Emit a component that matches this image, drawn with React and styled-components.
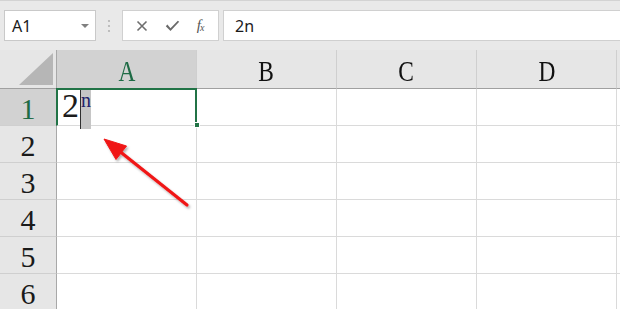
import React from "react";
import styled, { createGlobalStyle } from "styled-components";

const Global = createGlobalStyle`
  html, body { margin: 0; padding: 0; background: #ffffff; overflow: hidden; }
  * { box-sizing: border-box; }
`;

const Page = styled.div`
  position: relative;
  width: 620px;
  height: 309px;
  overflow: hidden;
  background: #ffffff;
  font-family: "Liberation Serif", "Times New Roman", serif;
`;

const Toolbar = styled.div`
  height: 50px;
  background: #e9e9e9;
  border-top: 1px solid #d3d3d3;
  display: flex;
  align-items: flex-start;
  padding-top: 9px;
  padding-left: 4px;
`;

const NameBox = styled.div`
  width: 92px;
  height: 31px;
  background: #fff;
  border: 1px solid #c9c9c9;
  display: flex;
  align-items: center;
  justify-content: space-between;
  padding: 0 6px 0 7px;
  font-family: "Noto Sans", "Liberation Sans", sans-serif;
  font-size: 16px;
  color: #1a1a1a;
`;

const Caret = styled.span`
  width: 0;
  height: 0;
  border-left: 4px solid transparent;
  border-right: 4px solid transparent;
  border-top: 4px solid #808080;
  margin-top: 1px;
`;

const Dots = styled.div`
  width: 26px;
  height: 31px;
  display: flex;
  align-items: center;
  justify-content: center;
`;

const IconBox = styled.div`
  width: 97px;
  height: 31px;
  background: #fff;
  border: 1px solid #d0d0d0;
  display: flex;
  align-items: center;
  justify-content: space-around;
  padding: 0 6px 0 4px;
  color: #707070;
`;

const Fx = styled.span`
  font-family: "Liberation Serif", serif;
  font-style: italic;
  font-size: 15px;
  color: #555;
  letter-spacing: -1px;
  sub { font-size: 10px; vertical-align: -1px; }
`;

const FormulaInput = styled.div`
  flex: 1;
  margin-left: 4px;
  height: 31px;
  background: #fff;
  border: 1px solid #d0d0d0;
  border-right: none;
  display: flex;
  align-items: center;
  padding-left: 11px;
  font-family: "Noto Sans", "Liberation Sans", sans-serif;
  font-size: 16px;
  color: #1a1a1a;
`;

const Grid = styled.div`
  display: grid;
  grid-template-columns: 57px 140px 140px 140px 140px 10px;
  grid-template-rows: 39px repeat(6, 37px);
`;

const Corner = styled.div`
  background: #e6e6e6;
  border-right: 1px solid #a8a8a8;
  border-bottom: 1px solid #a0a0a0;
  display: flex;
  align-items: flex-end;
  justify-content: flex-end;
  padding: 0 3px 3px 0;
`;

const ColHead = styled.div`
  background: ${(p) => (p.$active ? "#d2d2d2" : "#e6e6e6")};
  color: ${(p) => (p.$active ? "#1e6b45" : "#111")};
  border-right: 1px solid #cfcfcf;
  border-bottom: 1px solid #a0a0a0;
  display: flex;
  align-items: center;
  justify-content: center;
  padding-top: 4px;
  font-size: 30px;
  line-height: 1;
`;

const Narrow = styled.span`
  display: inline-block;
  transform: scaleX(0.78);
`;

const RowHead = styled.div`
  background: ${(p) => (p.$active ? "#d2d2d2" : "#e6e6e6")};
  color: ${(p) => (p.$active ? "#1e6b45" : "#1a1a1a")};
  border-right: 1px solid #a8a8a8;
  border-bottom: 1px solid #cfcfcf;
  display: flex;
  align-items: center;
  justify-content: center;
  padding-top: 3px;
  font-size: 30px;
  line-height: 1;
`;

const Cell = styled.div`
  position: relative;
  background: #fff;
  border-right: 1px solid #dadada;
  border-bottom: 1px solid #dadada;
`;

const ActiveCell = styled.div`
  position: relative;
  background: #fff;
  border-top: 2px solid #217346;
  border-left: 2px solid #217346;
  border-right: 2px solid #217346;
  border-bottom: 1px solid #dadada;
  margin-top: -1px;
  margin-left: -1px;
  display: flex;
  align-items: stretch;
  padding-left: 4px;
  z-index: 1;
`;

const Digit = styled.span`
  font-size: 34px;
  line-height: 1;
  color: #1c1c1c;
  align-self: flex-end;
  margin-bottom: 2px;
`;

const Selection = styled.span`
  display: block;
  width: 11px;
  height: 39px;
  margin-left: 1px;
  background: #c6c6c6;
  border-left: 1px solid #303030;
  font-family: "Liberation Serif", serif;
  font-size: 20px;
  line-height: 16px;
  color: #22236a;
  padding-left: 0;
  padding-top: 2px;
  overflow: visible;
  white-space: nowrap;
`;

const Handle = styled.span`
  position: absolute;
  right: -5px;
  bottom: -3px;
  width: 6px;
  height: 6px;
  background: #217346;
  border: 1px solid #fff;
`;

const Overlay = styled.svg`
  position: absolute;
  left: 0;
  top: 0;
  pointer-events: none;
`;

const cols = ["A", "B", "C", "D"];
const rows = [1, 2, 3, 4, 5, 6];

export default function App() {
  return (
    <Page>
      <Global />
      <Toolbar>
        <NameBox>
          A1
          <Caret />
        </NameBox>
        <Dots>
          <svg width="4" height="14" viewBox="0 0 4 14">
            <circle cx="2" cy="2" r="1.1" fill="#b3b3b3" />
            <circle cx="2" cy="7" r="1.1" fill="#b3b3b3" />
            <circle cx="2" cy="12" r="1.1" fill="#b3b3b3" />
          </svg>
        </Dots>
        <IconBox>
          <svg width="12" height="12" viewBox="0 0 12 12">
            <path d="M1.5 1.5 L10.5 10.5 M10.5 1.5 L1.5 10.5" stroke="#6e6e6e" strokeWidth="1.6" fill="none" />
          </svg>
          <svg width="15" height="12" viewBox="0 0 15 12">
            <path d="M0.8 6.2 L5.5 11 L14.2 1.8 L12.8 0.8 L5.5 8.2 L2.4 4.6 Z" fill="#6a6a6a" />
          </svg>
          <Fx>
            f<sub>x</sub>
          </Fx>
        </IconBox>
        <FormulaInput>2n</FormulaInput>
      </Toolbar>
      <Grid>
        <Corner>
          <svg width="34" height="32" viewBox="0 0 34 32">
            <polygon points="34,0 34,32 0,32" fill="#b6b6b6" />
          </svg>
        </Corner>
        {cols.map((c, i) => (
          <ColHead key={c} $active={i === 0}>
            <Narrow>{c}</Narrow>
          </ColHead>
        ))}
        <ColHead />
        {rows.map((r) => (
          <React.Fragment key={r}>
            <RowHead $active={r === 1}>{r}</RowHead>
            {cols.map((c, i) =>
              r === 1 && i === 0 ? (
                <ActiveCell key={c}>
                  <Digit>2</Digit>
                  <Selection>n</Selection>
                  <Handle />
                </ActiveCell>
              ) : (
                <Cell key={c} />
              )
            )}
            <Cell />
          </React.Fragment>
        ))}
      </Grid>
      <Overlay width="620" height="309" viewBox="0 0 620 309">
        <defs>
          <filter id="sh" x="-20%" y="-20%" width="140%" height="140%">
            <feDropShadow dx="1.5" dy="2" stdDeviation="1.2" floodColor="#000" floodOpacity="0.3" />
          </filter>
        </defs>
        <g filter="url(#sh)" fill="#f01616" stroke="#f01616">
          <line x1="187" y1="205" x2="118" y2="150" strokeWidth="3.2" strokeLinecap="round" />
          <polygon points="104,139 126.5,146 116,159.5" strokeWidth="1" strokeLinejoin="round" />
        </g>
      </Overlay>
    </Page>
  );
}
